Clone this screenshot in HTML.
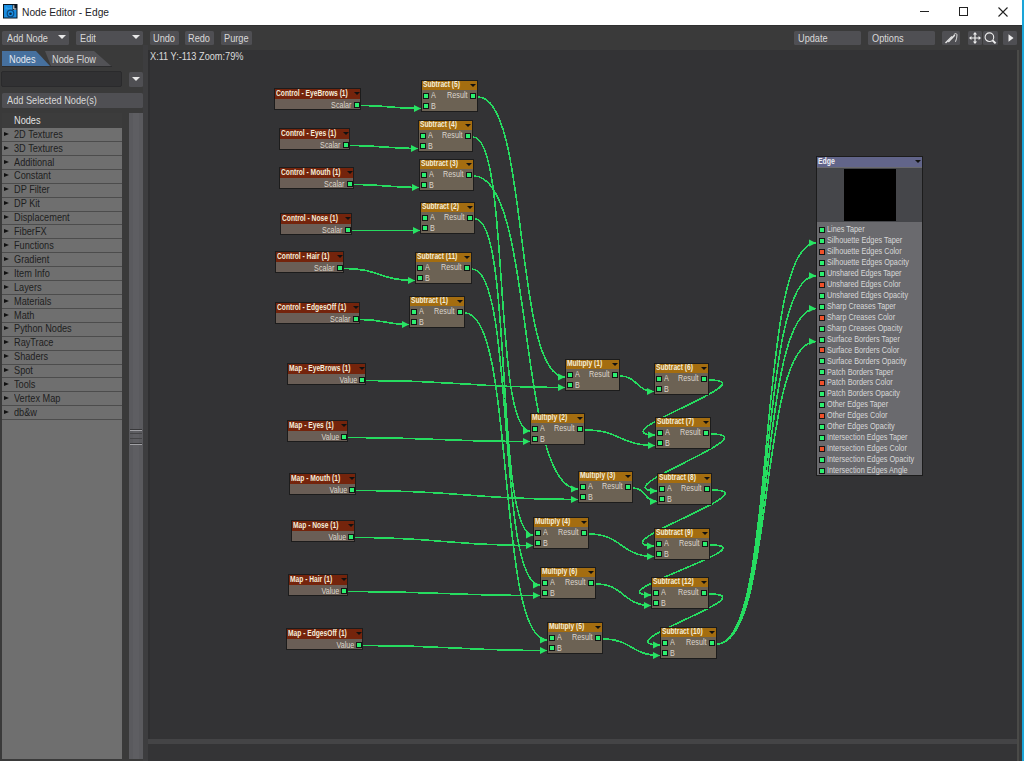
<!DOCTYPE html><html><head><meta charset="utf-8"><style>
*{box-sizing:border-box;margin:0;padding:0}
html,body{width:1024px;height:761px;overflow:hidden;background:#3a3a3a;font-family:"Liberation Sans",sans-serif}
.a{position:absolute}
.t{position:absolute;white-space:nowrap}
.t span{display:inline-block}
.btn{position:absolute;background:#4f4f53;border-radius:1.5px}
.tri{position:absolute;width:0;height:0;border-left:4px solid transparent;border-right:4px solid transparent;border-top:4.5px solid #e8e8e8}
.li{position:absolute;left:2px;width:120px;height:14px;border-bottom:1px solid #4c4c4c}
.ar{position:absolute;left:4px;width:0;height:0;border-top:2.5px solid transparent;border-bottom:2.5px solid transparent;border-left:5px solid #111}
.nd{position:absolute;border:1px solid #1c1c1c;overflow:hidden}
.nh{position:absolute;left:0;right:0;top:0;height:10px}
.nt{position:absolute;right:2px;width:0;height:0;border-left:3px solid transparent;border-right:3px solid transparent;border-top:3.5px solid #111}
.pt{position:absolute;width:6px;height:6px;background:#2cf070;border:1px solid #151515}
.pr{position:absolute;width:6px;height:6px;background:#f0502a;border:1px solid #151515}

</style></head><body>
<div class="a" style="left:0;top:0;width:1022px;height:25px;background:#fff"></div>
<div class="a" style="left:1022px;top:0;width:2px;height:761px;background:#1aa5d8"></div>
<svg class="a" style="left:3px;top:4px" width="15" height="15"><rect x="0" y="0" width="14.5" height="14.5" fill="#0a1622"/><rect x="1" y="1" width="12.5" height="12.5" fill="#1c8ee0"/><path d="M2,5 L3,2 L5,4 L8,4 L10,2 L10.5,6" fill="#2aa0ee"/><circle cx="7.5" cy="9.5" r="3.3" stroke="#0d4a80" stroke-width="1.2" fill="none"/><circle cx="7.5" cy="9.8" r="1.3" fill="#072a48"/><rect x="9.5" y="0.5" width="4.5" height="5.5" fill="#0a1622"/><path d="M10.8,1.2V5H13.3" stroke="#f0f0f0" stroke-width="1" fill="none"/></svg>
<div class="t" style="left:22.00px;top:7.49px;font-size:11px;line-height:11px;color:#1e1e28;font-weight:normal;"><span style="transform:scaleX(0.93);transform-origin:0 0">Node Editor - Edge</span></div>
<div class="a" style="left:920px;top:11px;width:9px;height:1px;background:#222"></div>
<div class="a" style="left:959px;top:7px;width:9px;height:9px;border:1px solid #222"></div>
<svg class="a" style="left:998px;top:7px" width="10" height="10"><path d="M0.5,0.5L9.5,9.5M9.5,0.5L0.5,9.5" stroke="#222" stroke-width="1.1"/></svg>
<div class="a" style="left:0;top:25px;width:1022px;height:24px;background:#3a3a3a"></div>
<div class="a" style="left:0;top:25px;width:1022px;height:1px;background:#303030"></div>
<div class="btn" style="left:2px;top:31px;width:67px;height:14px"></div>
<div class="btn" style="left:76px;top:31px;width:67px;height:14px"></div>
<div class="btn" style="left:150px;top:31px;width:29px;height:14px"></div>
<div class="btn" style="left:185px;top:31px;width:29px;height:14px"></div>
<div class="btn" style="left:221px;top:31px;width:31px;height:14px"></div>
<div class="btn" style="left:794px;top:31px;width:67px;height:14px"></div>
<div class="btn" style="left:868px;top:31px;width:67px;height:14px"></div>
<div class="btn" style="left:942px;top:31px;width:18px;height:14px"></div>
<div class="btn" style="left:968px;top:31px;width:14px;height:14px"></div>
<div class="btn" style="left:983px;top:31px;width:15px;height:14px"></div>
<div class="btn" style="left:1003px;top:31px;width:14px;height:14px"></div>
<div class="t" style="left:6.60px;top:32.69px;font-size:11px;line-height:11px;color:#d8d8d8;font-weight:normal;"><span style="transform:scaleX(0.835);transform-origin:0 0">Add Node</span></div>
<div class="t" style="left:80.30px;top:32.69px;font-size:11px;line-height:11px;color:#d8d8d8;font-weight:normal;"><span style="transform:scaleX(0.835);transform-origin:0 0">Edit</span></div>
<div class="t" style="left:153.00px;top:32.69px;font-size:11px;line-height:11px;color:#d8d8d8;font-weight:normal;"><span style="transform:scaleX(0.835);transform-origin:0 0">Undo</span></div>
<div class="t" style="left:188.00px;top:32.69px;font-size:11px;line-height:11px;color:#d8d8d8;font-weight:normal;"><span style="transform:scaleX(0.835);transform-origin:0 0">Redo</span></div>
<div class="t" style="left:223.50px;top:32.69px;font-size:11px;line-height:11px;color:#d8d8d8;font-weight:normal;"><span style="transform:scaleX(0.835);transform-origin:0 0">Purge</span></div>
<div class="t" style="left:798.00px;top:32.69px;font-size:11px;line-height:11px;color:#d8d8d8;font-weight:normal;"><span style="transform:scaleX(0.835);transform-origin:0 0">Update</span></div>
<div class="t" style="left:871.70px;top:32.69px;font-size:11px;line-height:11px;color:#d8d8d8;font-weight:normal;"><span style="transform:scaleX(0.835);transform-origin:0 0">Options</span></div>
<div class="tri" style="left:58px;top:35px"></div>
<div class="tri" style="left:132px;top:35px"></div>
<svg class="a" style="left:942px;top:31px" width="18" height="14"><path d="M3.5,12 L10,5.5" stroke="#e4e4e4" stroke-width="1.4"/><path d="M5.5,11 L11.5,4.2 Q13,3 13.2,4.8 L7,11.2Z" fill="#e4e4e4"/><path d="M11.8,3.6 Q14.5,1.5 15,3.8 Q15,7 13.5,10.8" stroke="#d8d8d8" stroke-width="1" fill="none"/></svg>
<svg class="a" style="left:968px;top:31px" width="14" height="14"><path d="M7,3V11M3,7H11" stroke="#eee" stroke-width="1.2"/><path d="M7,1L4.9,3.4H9.1ZM7,13L4.9,10.6H9.1ZM1,7L3.4,4.9V9.1ZM13,7L10.6,4.9V9.1Z" fill="#eee"/></svg>
<svg class="a" style="left:983px;top:31px" width="15" height="14"><circle cx="6.4" cy="6.2" r="4.3" stroke="#eee" stroke-width="1.1" fill="none"/><path d="M9.6,9.4L12.6,12.4" stroke="#eee" stroke-width="2"/></svg>
<svg class="a" style="left:1003px;top:31px" width="14" height="14"><path d="M5.5,3.2L10.5,7L5.5,10.8Z" fill="#eee"/></svg>
<div class="a" style="left:0;top:49px;width:148px;height:712px;background:#3a3a3a"></div>
<div class="a" style="left:143px;top:45px;width:5px;height:716px;background:#3d3d3f"></div>
<svg class="a" style="left:0;top:50px" width="115" height="17"><path d="M45,1 H94 L111,16 H51 Z" fill="#525256"/><path d="M2,16.5 H112" stroke="#2c2c2e" stroke-width="1"/><path d="M2,1 H36 L50,16 H2 Z" fill="#46709e"/></svg>
<div class="t" style="left:8.80px;top:53.69px;font-size:11px;line-height:11px;color:#e4e8ee;font-weight:normal;"><span style="transform:scaleX(0.835);transform-origin:0 0">Nodes</span></div>
<div class="t" style="left:52.00px;top:53.69px;font-size:11px;line-height:11px;color:#d8d8d8;font-weight:normal;"><span style="transform:scaleX(0.835);transform-origin:0 0">Node Flow</span></div>
<div class="a" style="left:1px;top:71px;width:121px;height:16px;background:#313133;border:1px solid #2a2a2c;border-radius:2px"></div>
<div class="btn" style="left:129px;top:72px;width:14px;height:15px"></div><div class="tri" style="left:132px;top:77px"></div>
<div class="btn" style="left:2px;top:93px;width:141px;height:15px"></div>
<div class="t" style="left:6.60px;top:95.49px;font-size:11px;line-height:11px;color:#d8d8d8;font-weight:normal;"><span style="transform:scaleX(0.835);transform-origin:0 0">Add Selected Node(s)</span></div>
<div class="a" style="left:2px;top:113px;width:120px;height:646px;background:#6f6f6f"></div>
<div class="a" style="left:2px;top:113px;width:120px;height:15px;background:#3c3c3c"></div>
<div class="t" style="left:14.00px;top:114.89px;font-size:11px;line-height:11px;color:#e2e2e2;font-weight:normal;"><span style="transform:scaleX(0.835);transform-origin:0 0">Nodes</span></div>
<div class="li" style="top:128.00px"></div>
<div class="ar" style="top:131.70px"></div>
<div class="t" style="left:14.00px;top:128.69px;font-size:11px;line-height:11px;color:#1e1e1e;font-weight:normal;"><span style="transform:scaleX(0.835);transform-origin:0 0">2D Textures</span></div>
<div class="li" style="top:141.91px"></div>
<div class="ar" style="top:145.61px"></div>
<div class="t" style="left:14.00px;top:142.60px;font-size:11px;line-height:11px;color:#1e1e1e;font-weight:normal;"><span style="transform:scaleX(0.835);transform-origin:0 0">3D Textures</span></div>
<div class="li" style="top:155.82px"></div>
<div class="ar" style="top:159.52px"></div>
<div class="t" style="left:14.00px;top:156.51px;font-size:11px;line-height:11px;color:#1e1e1e;font-weight:normal;"><span style="transform:scaleX(0.835);transform-origin:0 0">Additional</span></div>
<div class="li" style="top:169.73px"></div>
<div class="ar" style="top:173.43px"></div>
<div class="t" style="left:14.00px;top:170.42px;font-size:11px;line-height:11px;color:#1e1e1e;font-weight:normal;"><span style="transform:scaleX(0.835);transform-origin:0 0">Constant</span></div>
<div class="li" style="top:183.64px"></div>
<div class="ar" style="top:187.34px"></div>
<div class="t" style="left:14.00px;top:184.33px;font-size:11px;line-height:11px;color:#1e1e1e;font-weight:normal;"><span style="transform:scaleX(0.835);transform-origin:0 0">DP Filter</span></div>
<div class="li" style="top:197.55px"></div>
<div class="ar" style="top:201.25px"></div>
<div class="t" style="left:14.00px;top:198.24px;font-size:11px;line-height:11px;color:#1e1e1e;font-weight:normal;"><span style="transform:scaleX(0.835);transform-origin:0 0">DP Kit</span></div>
<div class="li" style="top:211.46px"></div>
<div class="ar" style="top:215.16px"></div>
<div class="t" style="left:14.00px;top:212.15px;font-size:11px;line-height:11px;color:#1e1e1e;font-weight:normal;"><span style="transform:scaleX(0.835);transform-origin:0 0">Displacement</span></div>
<div class="li" style="top:225.37px"></div>
<div class="ar" style="top:229.07px"></div>
<div class="t" style="left:14.00px;top:226.06px;font-size:11px;line-height:11px;color:#1e1e1e;font-weight:normal;"><span style="transform:scaleX(0.835);transform-origin:0 0">FiberFX</span></div>
<div class="li" style="top:239.28px"></div>
<div class="ar" style="top:242.98px"></div>
<div class="t" style="left:14.00px;top:239.97px;font-size:11px;line-height:11px;color:#1e1e1e;font-weight:normal;"><span style="transform:scaleX(0.835);transform-origin:0 0">Functions</span></div>
<div class="li" style="top:253.19px"></div>
<div class="ar" style="top:256.89px"></div>
<div class="t" style="left:14.00px;top:253.88px;font-size:11px;line-height:11px;color:#1e1e1e;font-weight:normal;"><span style="transform:scaleX(0.835);transform-origin:0 0">Gradient</span></div>
<div class="li" style="top:267.10px"></div>
<div class="ar" style="top:270.80px"></div>
<div class="t" style="left:14.00px;top:267.79px;font-size:11px;line-height:11px;color:#1e1e1e;font-weight:normal;"><span style="transform:scaleX(0.835);transform-origin:0 0">Item Info</span></div>
<div class="li" style="top:281.01px"></div>
<div class="ar" style="top:284.71px"></div>
<div class="t" style="left:14.00px;top:281.70px;font-size:11px;line-height:11px;color:#1e1e1e;font-weight:normal;"><span style="transform:scaleX(0.835);transform-origin:0 0">Layers</span></div>
<div class="li" style="top:294.92px"></div>
<div class="ar" style="top:298.62px"></div>
<div class="t" style="left:14.00px;top:295.61px;font-size:11px;line-height:11px;color:#1e1e1e;font-weight:normal;"><span style="transform:scaleX(0.835);transform-origin:0 0">Materials</span></div>
<div class="li" style="top:308.83px"></div>
<div class="ar" style="top:312.53px"></div>
<div class="t" style="left:14.00px;top:309.52px;font-size:11px;line-height:11px;color:#1e1e1e;font-weight:normal;"><span style="transform:scaleX(0.835);transform-origin:0 0">Math</span></div>
<div class="li" style="top:322.74px"></div>
<div class="ar" style="top:326.44px"></div>
<div class="t" style="left:14.00px;top:323.43px;font-size:11px;line-height:11px;color:#1e1e1e;font-weight:normal;"><span style="transform:scaleX(0.835);transform-origin:0 0">Python Nodes</span></div>
<div class="li" style="top:336.65px"></div>
<div class="ar" style="top:340.35px"></div>
<div class="t" style="left:14.00px;top:337.34px;font-size:11px;line-height:11px;color:#1e1e1e;font-weight:normal;"><span style="transform:scaleX(0.835);transform-origin:0 0">RayTrace</span></div>
<div class="li" style="top:350.56px"></div>
<div class="ar" style="top:354.26px"></div>
<div class="t" style="left:14.00px;top:351.25px;font-size:11px;line-height:11px;color:#1e1e1e;font-weight:normal;"><span style="transform:scaleX(0.835);transform-origin:0 0">Shaders</span></div>
<div class="li" style="top:364.47px"></div>
<div class="ar" style="top:368.17px"></div>
<div class="t" style="left:14.00px;top:365.16px;font-size:11px;line-height:11px;color:#1e1e1e;font-weight:normal;"><span style="transform:scaleX(0.835);transform-origin:0 0">Spot</span></div>
<div class="li" style="top:378.38px"></div>
<div class="ar" style="top:382.08px"></div>
<div class="t" style="left:14.00px;top:379.07px;font-size:11px;line-height:11px;color:#1e1e1e;font-weight:normal;"><span style="transform:scaleX(0.835);transform-origin:0 0">Tools</span></div>
<div class="li" style="top:392.29px"></div>
<div class="ar" style="top:395.99px"></div>
<div class="t" style="left:14.00px;top:392.98px;font-size:11px;line-height:11px;color:#1e1e1e;font-weight:normal;"><span style="transform:scaleX(0.835);transform-origin:0 0">Vertex Map</span></div>
<div class="li" style="top:406.20px"></div>
<div class="ar" style="top:409.90px"></div>
<div class="t" style="left:14.00px;top:406.89px;font-size:11px;line-height:11px;color:#1e1e1e;font-weight:normal;"><span style="transform:scaleX(0.835);transform-origin:0 0">db&amp;w</span></div>
<div class="a" style="left:129px;top:113px;width:14px;height:646px;background:#5a5a5e"></div>
<div class="a" style="left:133px;top:113px;width:6px;height:646px;background:#5e5e62"></div>
<div class="a" style="left:130px;top:429px;width:12px;height:1px;background:#38383a"></div>
<div class="a" style="left:130px;top:430px;width:12px;height:1px;background:#a0a0a4"></div>
<div class="a" style="left:130px;top:433px;width:12px;height:1px;background:#444446"></div>
<div class="a" style="left:130px;top:438px;width:12px;height:1px;background:#444446"></div>
<div class="a" style="left:130px;top:443px;width:12px;height:1px;background:#38383a"></div>
<div class="a" style="left:130px;top:444px;width:12px;height:1px;background:#a0a0a4"></div>
<div class="a" style="left:148px;top:50px;width:869px;height:689px;background:#333335"></div>
<div class="a" style="left:148px;top:50px;width:2px;height:689px;background:#2f2f31"></div>
<div class="a" style="left:148px;top:739px;width:869px;height:5px;background:#444446"></div>
<div class="a" style="left:148px;top:744px;width:869px;height:17px;background:#343436"></div>
<div class="a" style="left:1017px;top:50px;width:2px;height:711px;background:#4a4a48"></div>
<div class="t" style="left:150.00px;top:51.19px;font-size:11px;line-height:11px;color:#dcdcdc;font-weight:normal;"><span style="transform:scaleX(0.835);transform-origin:0 0">X:11 Y:-113 Zoom:79%</span></div>
<svg class="a" style="left:0;top:0" width="1024" height="761">
<g fill="none" stroke="#26dc60" stroke-width="1.6" shape-rendering="crispEdges">
<path d="M361.0,105.5 C391.1,105.5 390.9,108.5 421.0,108.5"/>
<path d="M350.0,145.5 C384.1,145.5 383.9,148.5 418.0,148.5"/>
<path d="M354.0,184.5 C386.6,184.5 386.4,187.5 419.0,187.5"/>
<path d="M352.0,230.5 C386.0,230.5 386.0,230.5 420.0,230.5"/>
<path d="M344.0,268.5 C379.9,268.5 379.1,280.5 415.0,280.5"/>
<path d="M360.0,319.5 C384.6,319.5 384.4,324.5 409.0,324.5"/>
<path d="M366.0,380.5 C465.7,380.5 465.3,387.5 565.0,387.5"/>
<path d="M348.0,437.5 C439.1,437.5 438.9,441.5 530.0,441.5"/>
<path d="M356.0,490.5 C467.3,490.5 466.7,499.5 578.0,499.5"/>
<path d="M355.0,537.5 C444.2,537.5 443.8,545.5 533.0,545.5"/>
<path d="M348.0,591.5 C444.1,591.5 443.9,595.5 540.0,595.5"/>
<path d="M363.0,645.5 C455.1,645.5 454.9,650.5 547.0,650.5"/>
<path d="M478.0,97.0 C529.9,97.0 513.1,377.0 565.0,377.0"/>
<path d="M473.0,137.0 C510.3,137.0 492.7,431.0 530.0,431.0"/>
<path d="M474.0,176.0 C535.4,176.0 516.6,489.0 578.0,489.0"/>
<path d="M475.0,219.0 C513.5,219.0 494.5,535.0 533.0,535.0"/>
<path d="M472.0,269.0 C515.5,269.0 496.5,585.0 540.0,585.0"/>
<path d="M465.0,313.0 C515.8,313.0 496.2,640.0 547.0,640.0"/>
<path d="M620.0,376.0 C637.5,376.0 636.5,391.5 654.0,391.5"/>
<path d="M585.0,430.0 C620.5,430.0 619.5,445.5 655.0,445.5"/>
<path d="M633.0,488.0 C645.4,488.0 644.6,501.5 657.0,501.5"/>
<path d="M589.0,534.0 C622.2,534.0 620.8,556.5 654.0,556.5"/>
<path d="M596.0,584.0 C624.1,584.0 622.9,605.5 651.0,605.5"/>
<path d="M603.0,639.0 C632.0,639.0 631.0,655.5 660.0,655.5"/>
<path d="M709.0,380.0 C771.0,380.0 594.5,435.0 656.5,435.0"/>
<path d="M711.0,434.0 C773.0,434.0 596.5,491.0 658.5,491.0"/>
<path d="M712.0,490.0 C774.0,490.0 593.5,546.0 655.5,546.0"/>
<path d="M710.0,545.0 C772.0,545.0 590.5,595.0 652.5,595.0"/>
<path d="M709.0,594.0 C771.0,594.0 599.5,645.0 661.5,645.0"/>
<path d="M717.0,644.0 C778.5,644.0 754.5,242.9 816.0,242.9"/>
<path d="M717.0,644.0 C777.5,644.0 755.5,275.8 816.0,275.8"/>
<path d="M717.0,644.0 C776.6,644.0 756.4,308.6 816.0,308.6"/>
<path d="M717.0,644.0 C775.6,644.0 757.4,341.5 816.0,341.5"/>
</g><g fill="#28e464">
<path d="M421.0,108.5L414.0,105.0L414.0,112.0Z"/>
<path d="M418.0,148.5L411.0,145.0L411.0,152.0Z"/>
<path d="M419.0,187.5L412.0,184.0L412.0,191.0Z"/>
<path d="M420.0,230.5L413.0,227.0L413.0,234.0Z"/>
<path d="M415.0,280.5L408.0,277.0L408.0,284.0Z"/>
<path d="M409.0,324.5L402.0,321.0L402.0,328.0Z"/>
<path d="M565.0,387.5L558.0,384.0L558.0,391.0Z"/>
<path d="M530.0,441.5L523.0,438.0L523.0,445.0Z"/>
<path d="M578.0,499.5L571.0,496.0L571.0,503.0Z"/>
<path d="M533.0,545.5L526.0,542.0L526.0,549.0Z"/>
<path d="M540.0,595.5L533.0,592.0L533.0,599.0Z"/>
<path d="M547.0,650.5L540.0,647.0L540.0,654.0Z"/>
<path d="M565.0,377.0L558.0,373.5L558.0,380.5Z"/>
<path d="M530.0,431.0L523.0,427.5L523.0,434.5Z"/>
<path d="M578.0,489.0L571.0,485.5L571.0,492.5Z"/>
<path d="M533.0,535.0L526.0,531.5L526.0,538.5Z"/>
<path d="M540.0,585.0L533.0,581.5L533.0,588.5Z"/>
<path d="M547.0,640.0L540.0,636.5L540.0,643.5Z"/>
<path d="M654.0,391.5L647.0,388.0L647.0,395.0Z"/>
<path d="M655.0,445.5L648.0,442.0L648.0,449.0Z"/>
<path d="M657.0,501.5L650.0,498.0L650.0,505.0Z"/>
<path d="M654.0,556.5L647.0,553.0L647.0,560.0Z"/>
<path d="M651.0,605.5L644.0,602.0L644.0,609.0Z"/>
<path d="M660.0,655.5L653.0,652.0L653.0,659.0Z"/>
<path d="M655.0,435.0L648.0,431.5L648.0,438.5Z"/>
<path d="M657.0,491.0L650.0,487.5L650.0,494.5Z"/>
<path d="M654.0,546.0L647.0,542.5L647.0,549.5Z"/>
<path d="M651.0,595.0L644.0,591.5L644.0,598.5Z"/>
<path d="M660.0,645.0L653.0,641.5L653.0,648.5Z"/>
<path d="M816.0,242.9L809.0,239.4L809.0,246.4Z"/>
<path d="M816.0,275.8L809.0,272.3L809.0,279.3Z"/>
<path d="M816.0,308.6L809.0,305.1L809.0,312.1Z"/>
<path d="M816.0,341.5L809.0,338.0L809.0,345.0Z"/>
</g></svg>
<div class="nd" style="left:274px;top:88px;width:87px;height:22px;background:#6a5e56">
<div class="nh" style="background:#74240c"></div>
<div class="t" style="left:1.00px;top:0.18px;font-size:9px;line-height:9px;color:#f4eedc;font-weight:bold;"><span style="transform:scaleX(0.74);transform-origin:0 0">Control - EyeBrows (1)</span></div>
<div class="nt" style="top:3px;right:0"></div>
<div class="t" style="right:8.00px;top:11.88px;font-size:9px;line-height:9px;color:#dcd6cc;font-weight:normal;"><span style="transform:scaleX(0.8);transform-origin:100% 0">Scalar</span></div>
<div class="pt" style="right:0px;top:13px"></div>
</div>
<div class="nd" style="left:279px;top:128px;width:71px;height:22px;background:#6a5e56">
<div class="nh" style="background:#74240c"></div>
<div class="t" style="left:1.00px;top:0.18px;font-size:9px;line-height:9px;color:#f4eedc;font-weight:bold;"><span style="transform:scaleX(0.74);transform-origin:0 0">Control - Eyes (1)</span></div>
<div class="nt" style="top:3px;right:0"></div>
<div class="t" style="right:8.00px;top:11.88px;font-size:9px;line-height:9px;color:#dcd6cc;font-weight:normal;"><span style="transform:scaleX(0.8);transform-origin:100% 0">Scalar</span></div>
<div class="pt" style="right:0px;top:13px"></div>
</div>
<div class="nd" style="left:279px;top:167px;width:75px;height:22px;background:#6a5e56">
<div class="nh" style="background:#74240c"></div>
<div class="t" style="left:1.00px;top:0.18px;font-size:9px;line-height:9px;color:#f4eedc;font-weight:bold;"><span style="transform:scaleX(0.74);transform-origin:0 0">Control - Mouth (1)</span></div>
<div class="nt" style="top:3px;right:0"></div>
<div class="t" style="right:8.00px;top:11.88px;font-size:9px;line-height:9px;color:#dcd6cc;font-weight:normal;"><span style="transform:scaleX(0.8);transform-origin:100% 0">Scalar</span></div>
<div class="pt" style="right:0px;top:13px"></div>
</div>
<div class="nd" style="left:280px;top:213px;width:72px;height:22px;background:#6a5e56">
<div class="nh" style="background:#74240c"></div>
<div class="t" style="left:1.00px;top:0.18px;font-size:9px;line-height:9px;color:#f4eedc;font-weight:bold;"><span style="transform:scaleX(0.74);transform-origin:0 0">Control - Nose (1)</span></div>
<div class="nt" style="top:3px;right:0"></div>
<div class="t" style="right:8.00px;top:11.88px;font-size:9px;line-height:9px;color:#dcd6cc;font-weight:normal;"><span style="transform:scaleX(0.8);transform-origin:100% 0">Scalar</span></div>
<div class="pt" style="right:0px;top:13px"></div>
</div>
<div class="nd" style="left:275px;top:251px;width:69px;height:22px;background:#6a5e56">
<div class="nh" style="background:#74240c"></div>
<div class="t" style="left:1.00px;top:0.18px;font-size:9px;line-height:9px;color:#f4eedc;font-weight:bold;"><span style="transform:scaleX(0.74);transform-origin:0 0">Control - Hair (1)</span></div>
<div class="nt" style="top:3px;right:0"></div>
<div class="t" style="right:8.00px;top:11.88px;font-size:9px;line-height:9px;color:#dcd6cc;font-weight:normal;"><span style="transform:scaleX(0.8);transform-origin:100% 0">Scalar</span></div>
<div class="pt" style="right:0px;top:13px"></div>
</div>
<div class="nd" style="left:275px;top:302px;width:85px;height:22px;background:#6a5e56">
<div class="nh" style="background:#74240c"></div>
<div class="t" style="left:1.00px;top:0.18px;font-size:9px;line-height:9px;color:#f4eedc;font-weight:bold;"><span style="transform:scaleX(0.74);transform-origin:0 0">Control - EdgesOff (1)</span></div>
<div class="nt" style="top:3px;right:0"></div>
<div class="t" style="right:8.00px;top:11.88px;font-size:9px;line-height:9px;color:#dcd6cc;font-weight:normal;"><span style="transform:scaleX(0.8);transform-origin:100% 0">Scalar</span></div>
<div class="pt" style="right:0px;top:13px"></div>
</div>
<div class="nd" style="left:287px;top:363px;width:79px;height:22px;background:#6a5e56">
<div class="nh" style="background:#74240c"></div>
<div class="t" style="left:1.00px;top:0.18px;font-size:9px;line-height:9px;color:#f4eedc;font-weight:bold;"><span style="transform:scaleX(0.74);transform-origin:0 0">Map - EyeBrows (1)</span></div>
<div class="nt" style="top:3px;right:0"></div>
<div class="t" style="right:8.00px;top:11.88px;font-size:9px;line-height:9px;color:#dcd6cc;font-weight:normal;"><span style="transform:scaleX(0.8);transform-origin:100% 0">Value</span></div>
<div class="pt" style="right:0px;top:13px"></div>
</div>
<div class="nd" style="left:287px;top:420px;width:61px;height:22px;background:#6a5e56">
<div class="nh" style="background:#74240c"></div>
<div class="t" style="left:1.00px;top:0.18px;font-size:9px;line-height:9px;color:#f4eedc;font-weight:bold;"><span style="transform:scaleX(0.74);transform-origin:0 0">Map - Eyes (1)</span></div>
<div class="nt" style="top:3px;right:0"></div>
<div class="t" style="right:8.00px;top:11.88px;font-size:9px;line-height:9px;color:#dcd6cc;font-weight:normal;"><span style="transform:scaleX(0.8);transform-origin:100% 0">Value</span></div>
<div class="pt" style="right:0px;top:13px"></div>
</div>
<div class="nd" style="left:289px;top:473px;width:67px;height:22px;background:#6a5e56">
<div class="nh" style="background:#74240c"></div>
<div class="t" style="left:1.00px;top:0.18px;font-size:9px;line-height:9px;color:#f4eedc;font-weight:bold;"><span style="transform:scaleX(0.74);transform-origin:0 0">Map - Mouth (1)</span></div>
<div class="nt" style="top:3px;right:0"></div>
<div class="t" style="right:8.00px;top:11.88px;font-size:9px;line-height:9px;color:#dcd6cc;font-weight:normal;"><span style="transform:scaleX(0.8);transform-origin:100% 0">Value</span></div>
<div class="pt" style="right:0px;top:13px"></div>
</div>
<div class="nd" style="left:291px;top:520px;width:64px;height:22px;background:#6a5e56">
<div class="nh" style="background:#74240c"></div>
<div class="t" style="left:1.00px;top:0.18px;font-size:9px;line-height:9px;color:#f4eedc;font-weight:bold;"><span style="transform:scaleX(0.74);transform-origin:0 0">Map - Nose (1)</span></div>
<div class="nt" style="top:3px;right:0"></div>
<div class="t" style="right:8.00px;top:11.88px;font-size:9px;line-height:9px;color:#dcd6cc;font-weight:normal;"><span style="transform:scaleX(0.8);transform-origin:100% 0">Value</span></div>
<div class="pt" style="right:0px;top:13px"></div>
</div>
<div class="nd" style="left:288px;top:574px;width:60px;height:22px;background:#6a5e56">
<div class="nh" style="background:#74240c"></div>
<div class="t" style="left:1.00px;top:0.18px;font-size:9px;line-height:9px;color:#f4eedc;font-weight:bold;"><span style="transform:scaleX(0.74);transform-origin:0 0">Map - Hair (1)</span></div>
<div class="nt" style="top:3px;right:0"></div>
<div class="t" style="right:8.00px;top:11.88px;font-size:9px;line-height:9px;color:#dcd6cc;font-weight:normal;"><span style="transform:scaleX(0.8);transform-origin:100% 0">Value</span></div>
<div class="pt" style="right:0px;top:13px"></div>
</div>
<div class="nd" style="left:286px;top:628px;width:77px;height:22px;background:#6a5e56">
<div class="nh" style="background:#74240c"></div>
<div class="t" style="left:1.00px;top:0.18px;font-size:9px;line-height:9px;color:#f4eedc;font-weight:bold;"><span style="transform:scaleX(0.74);transform-origin:0 0">Map - EdgesOff (1)</span></div>
<div class="nt" style="top:3px;right:0"></div>
<div class="t" style="right:8.00px;top:11.88px;font-size:9px;line-height:9px;color:#dcd6cc;font-weight:normal;"><span style="transform:scaleX(0.8);transform-origin:100% 0">Value</span></div>
<div class="pt" style="right:0px;top:13px"></div>
</div>
<div class="nd" style="left:421px;top:80px;width:57px;height:32px;background:#6c6254">
<div class="nh" style="background:#a46d10;height:9px"></div>
<div class="t" style="left:1.00px;top:-0.62px;font-size:9px;line-height:9px;color:#f4eedc;font-weight:bold;"><span style="transform:scaleX(0.74);transform-origin:0 0">Subtract (5)</span></div>
<div class="nt" style="top:2.5px;right:1px"></div>
<div class="pt" style="left:1px;top:12px"></div><div class="t" style="left:9.00px;top:10.48px;font-size:9px;line-height:9px;color:#dcd6cc;font-weight:normal;"><span style="transform:scaleX(0.8);transform-origin:0 0">A</span></div>
<div class="pt" style="left:1px;top:22px"></div><div class="t" style="left:9.00px;top:21.08px;font-size:9px;line-height:9px;color:#dcd6cc;font-weight:normal;"><span style="transform:scaleX(0.8);transform-origin:0 0">B</span></div>
<div class="t" style="right:9.00px;top:10.48px;font-size:9px;line-height:9px;color:#dcd6cc;font-weight:normal;"><span style="transform:scaleX(0.8);transform-origin:100% 0">Result</span></div><div class="pt" style="right:1px;top:12px"></div>
</div>
<div class="nd" style="left:418px;top:120px;width:55px;height:32px;background:#6c6254">
<div class="nh" style="background:#a46d10;height:9px"></div>
<div class="t" style="left:1.00px;top:-0.62px;font-size:9px;line-height:9px;color:#f4eedc;font-weight:bold;"><span style="transform:scaleX(0.74);transform-origin:0 0">Subtract (4)</span></div>
<div class="nt" style="top:2.5px;right:1px"></div>
<div class="pt" style="left:1px;top:12px"></div><div class="t" style="left:9.00px;top:10.48px;font-size:9px;line-height:9px;color:#dcd6cc;font-weight:normal;"><span style="transform:scaleX(0.8);transform-origin:0 0">A</span></div>
<div class="pt" style="left:1px;top:22px"></div><div class="t" style="left:9.00px;top:21.08px;font-size:9px;line-height:9px;color:#dcd6cc;font-weight:normal;"><span style="transform:scaleX(0.8);transform-origin:0 0">B</span></div>
<div class="t" style="right:9.00px;top:10.48px;font-size:9px;line-height:9px;color:#dcd6cc;font-weight:normal;"><span style="transform:scaleX(0.8);transform-origin:100% 0">Result</span></div><div class="pt" style="right:1px;top:12px"></div>
</div>
<div class="nd" style="left:419px;top:159px;width:55px;height:32px;background:#6c6254">
<div class="nh" style="background:#a46d10;height:9px"></div>
<div class="t" style="left:1.00px;top:-0.62px;font-size:9px;line-height:9px;color:#f4eedc;font-weight:bold;"><span style="transform:scaleX(0.74);transform-origin:0 0">Subtract (3)</span></div>
<div class="nt" style="top:2.5px;right:1px"></div>
<div class="pt" style="left:1px;top:12px"></div><div class="t" style="left:9.00px;top:10.48px;font-size:9px;line-height:9px;color:#dcd6cc;font-weight:normal;"><span style="transform:scaleX(0.8);transform-origin:0 0">A</span></div>
<div class="pt" style="left:1px;top:22px"></div><div class="t" style="left:9.00px;top:21.08px;font-size:9px;line-height:9px;color:#dcd6cc;font-weight:normal;"><span style="transform:scaleX(0.8);transform-origin:0 0">B</span></div>
<div class="t" style="right:9.00px;top:10.48px;font-size:9px;line-height:9px;color:#dcd6cc;font-weight:normal;"><span style="transform:scaleX(0.8);transform-origin:100% 0">Result</span></div><div class="pt" style="right:1px;top:12px"></div>
</div>
<div class="nd" style="left:420px;top:202px;width:55px;height:32px;background:#6c6254">
<div class="nh" style="background:#a46d10;height:9px"></div>
<div class="t" style="left:1.00px;top:-0.62px;font-size:9px;line-height:9px;color:#f4eedc;font-weight:bold;"><span style="transform:scaleX(0.74);transform-origin:0 0">Subtract (2)</span></div>
<div class="nt" style="top:2.5px;right:1px"></div>
<div class="pt" style="left:1px;top:12px"></div><div class="t" style="left:9.00px;top:10.48px;font-size:9px;line-height:9px;color:#dcd6cc;font-weight:normal;"><span style="transform:scaleX(0.8);transform-origin:0 0">A</span></div>
<div class="pt" style="left:1px;top:22px"></div><div class="t" style="left:9.00px;top:21.08px;font-size:9px;line-height:9px;color:#dcd6cc;font-weight:normal;"><span style="transform:scaleX(0.8);transform-origin:0 0">B</span></div>
<div class="t" style="right:9.00px;top:10.48px;font-size:9px;line-height:9px;color:#dcd6cc;font-weight:normal;"><span style="transform:scaleX(0.8);transform-origin:100% 0">Result</span></div><div class="pt" style="right:1px;top:12px"></div>
</div>
<div class="nd" style="left:415px;top:252px;width:57px;height:32px;background:#6c6254">
<div class="nh" style="background:#a46d10;height:9px"></div>
<div class="t" style="left:1.00px;top:-0.62px;font-size:9px;line-height:9px;color:#f4eedc;font-weight:bold;"><span style="transform:scaleX(0.74);transform-origin:0 0">Subtract (11)</span></div>
<div class="nt" style="top:2.5px;right:1px"></div>
<div class="pt" style="left:1px;top:12px"></div><div class="t" style="left:9.00px;top:10.48px;font-size:9px;line-height:9px;color:#dcd6cc;font-weight:normal;"><span style="transform:scaleX(0.8);transform-origin:0 0">A</span></div>
<div class="pt" style="left:1px;top:22px"></div><div class="t" style="left:9.00px;top:21.08px;font-size:9px;line-height:9px;color:#dcd6cc;font-weight:normal;"><span style="transform:scaleX(0.8);transform-origin:0 0">B</span></div>
<div class="t" style="right:9.00px;top:10.48px;font-size:9px;line-height:9px;color:#dcd6cc;font-weight:normal;"><span style="transform:scaleX(0.8);transform-origin:100% 0">Result</span></div><div class="pt" style="right:1px;top:12px"></div>
</div>
<div class="nd" style="left:409px;top:296px;width:56px;height:32px;background:#6c6254">
<div class="nh" style="background:#a46d10;height:9px"></div>
<div class="t" style="left:1.00px;top:-0.62px;font-size:9px;line-height:9px;color:#f4eedc;font-weight:bold;"><span style="transform:scaleX(0.74);transform-origin:0 0">Subtract (1)</span></div>
<div class="nt" style="top:2.5px;right:1px"></div>
<div class="pt" style="left:1px;top:12px"></div><div class="t" style="left:9.00px;top:10.48px;font-size:9px;line-height:9px;color:#dcd6cc;font-weight:normal;"><span style="transform:scaleX(0.8);transform-origin:0 0">A</span></div>
<div class="pt" style="left:1px;top:22px"></div><div class="t" style="left:9.00px;top:21.08px;font-size:9px;line-height:9px;color:#dcd6cc;font-weight:normal;"><span style="transform:scaleX(0.8);transform-origin:0 0">B</span></div>
<div class="t" style="right:9.00px;top:10.48px;font-size:9px;line-height:9px;color:#dcd6cc;font-weight:normal;"><span style="transform:scaleX(0.8);transform-origin:100% 0">Result</span></div><div class="pt" style="right:1px;top:12px"></div>
</div>
<div class="nd" style="left:565px;top:359px;width:55px;height:32px;background:#6c6254">
<div class="nh" style="background:#a46d10;height:9px"></div>
<div class="t" style="left:1.00px;top:-0.62px;font-size:9px;line-height:9px;color:#f4eedc;font-weight:bold;"><span style="transform:scaleX(0.74);transform-origin:0 0">Multiply (1)</span></div>
<div class="nt" style="top:2.5px;right:1px"></div>
<div class="pt" style="left:1px;top:12px"></div><div class="t" style="left:9.00px;top:10.48px;font-size:9px;line-height:9px;color:#dcd6cc;font-weight:normal;"><span style="transform:scaleX(0.8);transform-origin:0 0">A</span></div>
<div class="pt" style="left:1px;top:22px"></div><div class="t" style="left:9.00px;top:21.08px;font-size:9px;line-height:9px;color:#dcd6cc;font-weight:normal;"><span style="transform:scaleX(0.8);transform-origin:0 0">B</span></div>
<div class="t" style="right:9.00px;top:10.48px;font-size:9px;line-height:9px;color:#dcd6cc;font-weight:normal;"><span style="transform:scaleX(0.8);transform-origin:100% 0">Result</span></div><div class="pt" style="right:1px;top:12px"></div>
</div>
<div class="nd" style="left:654px;top:363px;width:55px;height:32px;background:#6c6254">
<div class="nh" style="background:#a46d10;height:9px"></div>
<div class="t" style="left:1.00px;top:-0.62px;font-size:9px;line-height:9px;color:#f4eedc;font-weight:bold;"><span style="transform:scaleX(0.74);transform-origin:0 0">Subtract (6)</span></div>
<div class="nt" style="top:2.5px;right:1px"></div>
<div class="pt" style="left:1px;top:12px"></div><div class="t" style="left:9.00px;top:10.48px;font-size:9px;line-height:9px;color:#dcd6cc;font-weight:normal;"><span style="transform:scaleX(0.8);transform-origin:0 0">A</span></div>
<div class="pt" style="left:1px;top:22px"></div><div class="t" style="left:9.00px;top:21.08px;font-size:9px;line-height:9px;color:#dcd6cc;font-weight:normal;"><span style="transform:scaleX(0.8);transform-origin:0 0">B</span></div>
<div class="t" style="right:9.00px;top:10.48px;font-size:9px;line-height:9px;color:#dcd6cc;font-weight:normal;"><span style="transform:scaleX(0.8);transform-origin:100% 0">Result</span></div><div class="pt" style="right:1px;top:12px"></div>
</div>
<div class="nd" style="left:530px;top:413px;width:55px;height:32px;background:#6c6254">
<div class="nh" style="background:#a46d10;height:9px"></div>
<div class="t" style="left:1.00px;top:-0.62px;font-size:9px;line-height:9px;color:#f4eedc;font-weight:bold;"><span style="transform:scaleX(0.74);transform-origin:0 0">Multiply (2)</span></div>
<div class="nt" style="top:2.5px;right:1px"></div>
<div class="pt" style="left:1px;top:12px"></div><div class="t" style="left:9.00px;top:10.48px;font-size:9px;line-height:9px;color:#dcd6cc;font-weight:normal;"><span style="transform:scaleX(0.8);transform-origin:0 0">A</span></div>
<div class="pt" style="left:1px;top:22px"></div><div class="t" style="left:9.00px;top:21.08px;font-size:9px;line-height:9px;color:#dcd6cc;font-weight:normal;"><span style="transform:scaleX(0.8);transform-origin:0 0">B</span></div>
<div class="t" style="right:9.00px;top:10.48px;font-size:9px;line-height:9px;color:#dcd6cc;font-weight:normal;"><span style="transform:scaleX(0.8);transform-origin:100% 0">Result</span></div><div class="pt" style="right:1px;top:12px"></div>
</div>
<div class="nd" style="left:655px;top:417px;width:56px;height:32px;background:#6c6254">
<div class="nh" style="background:#a46d10;height:9px"></div>
<div class="t" style="left:1.00px;top:-0.62px;font-size:9px;line-height:9px;color:#f4eedc;font-weight:bold;"><span style="transform:scaleX(0.74);transform-origin:0 0">Subtract (7)</span></div>
<div class="nt" style="top:2.5px;right:1px"></div>
<div class="pt" style="left:1px;top:12px"></div><div class="t" style="left:9.00px;top:10.48px;font-size:9px;line-height:9px;color:#dcd6cc;font-weight:normal;"><span style="transform:scaleX(0.8);transform-origin:0 0">A</span></div>
<div class="pt" style="left:1px;top:22px"></div><div class="t" style="left:9.00px;top:21.08px;font-size:9px;line-height:9px;color:#dcd6cc;font-weight:normal;"><span style="transform:scaleX(0.8);transform-origin:0 0">B</span></div>
<div class="t" style="right:9.00px;top:10.48px;font-size:9px;line-height:9px;color:#dcd6cc;font-weight:normal;"><span style="transform:scaleX(0.8);transform-origin:100% 0">Result</span></div><div class="pt" style="right:1px;top:12px"></div>
</div>
<div class="nd" style="left:578px;top:471px;width:55px;height:32px;background:#6c6254">
<div class="nh" style="background:#a46d10;height:9px"></div>
<div class="t" style="left:1.00px;top:-0.62px;font-size:9px;line-height:9px;color:#f4eedc;font-weight:bold;"><span style="transform:scaleX(0.74);transform-origin:0 0">Multiply (3)</span></div>
<div class="nt" style="top:2.5px;right:1px"></div>
<div class="pt" style="left:1px;top:12px"></div><div class="t" style="left:9.00px;top:10.48px;font-size:9px;line-height:9px;color:#dcd6cc;font-weight:normal;"><span style="transform:scaleX(0.8);transform-origin:0 0">A</span></div>
<div class="pt" style="left:1px;top:22px"></div><div class="t" style="left:9.00px;top:21.08px;font-size:9px;line-height:9px;color:#dcd6cc;font-weight:normal;"><span style="transform:scaleX(0.8);transform-origin:0 0">B</span></div>
<div class="t" style="right:9.00px;top:10.48px;font-size:9px;line-height:9px;color:#dcd6cc;font-weight:normal;"><span style="transform:scaleX(0.8);transform-origin:100% 0">Result</span></div><div class="pt" style="right:1px;top:12px"></div>
</div>
<div class="nd" style="left:657px;top:473px;width:55px;height:32px;background:#6c6254">
<div class="nh" style="background:#a46d10;height:9px"></div>
<div class="t" style="left:1.00px;top:-0.62px;font-size:9px;line-height:9px;color:#f4eedc;font-weight:bold;"><span style="transform:scaleX(0.74);transform-origin:0 0">Subtract (8)</span></div>
<div class="nt" style="top:2.5px;right:1px"></div>
<div class="pt" style="left:1px;top:12px"></div><div class="t" style="left:9.00px;top:10.48px;font-size:9px;line-height:9px;color:#dcd6cc;font-weight:normal;"><span style="transform:scaleX(0.8);transform-origin:0 0">A</span></div>
<div class="pt" style="left:1px;top:22px"></div><div class="t" style="left:9.00px;top:21.08px;font-size:9px;line-height:9px;color:#dcd6cc;font-weight:normal;"><span style="transform:scaleX(0.8);transform-origin:0 0">B</span></div>
<div class="t" style="right:9.00px;top:10.48px;font-size:9px;line-height:9px;color:#dcd6cc;font-weight:normal;"><span style="transform:scaleX(0.8);transform-origin:100% 0">Result</span></div><div class="pt" style="right:1px;top:12px"></div>
</div>
<div class="nd" style="left:533px;top:517px;width:56px;height:32px;background:#6c6254">
<div class="nh" style="background:#a46d10;height:9px"></div>
<div class="t" style="left:1.00px;top:-0.62px;font-size:9px;line-height:9px;color:#f4eedc;font-weight:bold;"><span style="transform:scaleX(0.74);transform-origin:0 0">Multiply (4)</span></div>
<div class="nt" style="top:2.5px;right:1px"></div>
<div class="pt" style="left:1px;top:12px"></div><div class="t" style="left:9.00px;top:10.48px;font-size:9px;line-height:9px;color:#dcd6cc;font-weight:normal;"><span style="transform:scaleX(0.8);transform-origin:0 0">A</span></div>
<div class="pt" style="left:1px;top:22px"></div><div class="t" style="left:9.00px;top:21.08px;font-size:9px;line-height:9px;color:#dcd6cc;font-weight:normal;"><span style="transform:scaleX(0.8);transform-origin:0 0">B</span></div>
<div class="t" style="right:9.00px;top:10.48px;font-size:9px;line-height:9px;color:#dcd6cc;font-weight:normal;"><span style="transform:scaleX(0.8);transform-origin:100% 0">Result</span></div><div class="pt" style="right:1px;top:12px"></div>
</div>
<div class="nd" style="left:654px;top:528px;width:56px;height:32px;background:#6c6254">
<div class="nh" style="background:#a46d10;height:9px"></div>
<div class="t" style="left:1.00px;top:-0.62px;font-size:9px;line-height:9px;color:#f4eedc;font-weight:bold;"><span style="transform:scaleX(0.74);transform-origin:0 0">Subtract (9)</span></div>
<div class="nt" style="top:2.5px;right:1px"></div>
<div class="pt" style="left:1px;top:12px"></div><div class="t" style="left:9.00px;top:10.48px;font-size:9px;line-height:9px;color:#dcd6cc;font-weight:normal;"><span style="transform:scaleX(0.8);transform-origin:0 0">A</span></div>
<div class="pt" style="left:1px;top:22px"></div><div class="t" style="left:9.00px;top:21.08px;font-size:9px;line-height:9px;color:#dcd6cc;font-weight:normal;"><span style="transform:scaleX(0.8);transform-origin:0 0">B</span></div>
<div class="t" style="right:9.00px;top:10.48px;font-size:9px;line-height:9px;color:#dcd6cc;font-weight:normal;"><span style="transform:scaleX(0.8);transform-origin:100% 0">Result</span></div><div class="pt" style="right:1px;top:12px"></div>
</div>
<div class="nd" style="left:540px;top:567px;width:56px;height:32px;background:#6c6254">
<div class="nh" style="background:#a46d10;height:9px"></div>
<div class="t" style="left:1.00px;top:-0.62px;font-size:9px;line-height:9px;color:#f4eedc;font-weight:bold;"><span style="transform:scaleX(0.74);transform-origin:0 0">Multiply (6)</span></div>
<div class="nt" style="top:2.5px;right:1px"></div>
<div class="pt" style="left:1px;top:12px"></div><div class="t" style="left:9.00px;top:10.48px;font-size:9px;line-height:9px;color:#dcd6cc;font-weight:normal;"><span style="transform:scaleX(0.8);transform-origin:0 0">A</span></div>
<div class="pt" style="left:1px;top:22px"></div><div class="t" style="left:9.00px;top:21.08px;font-size:9px;line-height:9px;color:#dcd6cc;font-weight:normal;"><span style="transform:scaleX(0.8);transform-origin:0 0">B</span></div>
<div class="t" style="right:9.00px;top:10.48px;font-size:9px;line-height:9px;color:#dcd6cc;font-weight:normal;"><span style="transform:scaleX(0.8);transform-origin:100% 0">Result</span></div><div class="pt" style="right:1px;top:12px"></div>
</div>
<div class="nd" style="left:651px;top:577px;width:58px;height:32px;background:#6c6254">
<div class="nh" style="background:#a46d10;height:9px"></div>
<div class="t" style="left:1.00px;top:-0.62px;font-size:9px;line-height:9px;color:#f4eedc;font-weight:bold;"><span style="transform:scaleX(0.74);transform-origin:0 0">Subtract (12)</span></div>
<div class="nt" style="top:2.5px;right:1px"></div>
<div class="pt" style="left:1px;top:12px"></div><div class="t" style="left:9.00px;top:10.48px;font-size:9px;line-height:9px;color:#dcd6cc;font-weight:normal;"><span style="transform:scaleX(0.8);transform-origin:0 0">A</span></div>
<div class="pt" style="left:1px;top:22px"></div><div class="t" style="left:9.00px;top:21.08px;font-size:9px;line-height:9px;color:#dcd6cc;font-weight:normal;"><span style="transform:scaleX(0.8);transform-origin:0 0">B</span></div>
<div class="t" style="right:9.00px;top:10.48px;font-size:9px;line-height:9px;color:#dcd6cc;font-weight:normal;"><span style="transform:scaleX(0.8);transform-origin:100% 0">Result</span></div><div class="pt" style="right:1px;top:12px"></div>
</div>
<div class="nd" style="left:547px;top:622px;width:56px;height:32px;background:#6c6254">
<div class="nh" style="background:#a46d10;height:9px"></div>
<div class="t" style="left:1.00px;top:-0.62px;font-size:9px;line-height:9px;color:#f4eedc;font-weight:bold;"><span style="transform:scaleX(0.74);transform-origin:0 0">Multiply (5)</span></div>
<div class="nt" style="top:2.5px;right:1px"></div>
<div class="pt" style="left:1px;top:12px"></div><div class="t" style="left:9.00px;top:10.48px;font-size:9px;line-height:9px;color:#dcd6cc;font-weight:normal;"><span style="transform:scaleX(0.8);transform-origin:0 0">A</span></div>
<div class="pt" style="left:1px;top:22px"></div><div class="t" style="left:9.00px;top:21.08px;font-size:9px;line-height:9px;color:#dcd6cc;font-weight:normal;"><span style="transform:scaleX(0.8);transform-origin:0 0">B</span></div>
<div class="t" style="right:9.00px;top:10.48px;font-size:9px;line-height:9px;color:#dcd6cc;font-weight:normal;"><span style="transform:scaleX(0.8);transform-origin:100% 0">Result</span></div><div class="pt" style="right:1px;top:12px"></div>
</div>
<div class="nd" style="left:660px;top:627px;width:57px;height:32px;background:#6c6254">
<div class="nh" style="background:#a46d10;height:9px"></div>
<div class="t" style="left:1.00px;top:-0.62px;font-size:9px;line-height:9px;color:#f4eedc;font-weight:bold;"><span style="transform:scaleX(0.74);transform-origin:0 0">Subtract (10)</span></div>
<div class="nt" style="top:2.5px;right:1px"></div>
<div class="pt" style="left:1px;top:12px"></div><div class="t" style="left:9.00px;top:10.48px;font-size:9px;line-height:9px;color:#dcd6cc;font-weight:normal;"><span style="transform:scaleX(0.8);transform-origin:0 0">A</span></div>
<div class="pt" style="left:1px;top:22px"></div><div class="t" style="left:9.00px;top:21.08px;font-size:9px;line-height:9px;color:#dcd6cc;font-weight:normal;"><span style="transform:scaleX(0.8);transform-origin:0 0">B</span></div>
<div class="t" style="right:9.00px;top:10.48px;font-size:9px;line-height:9px;color:#dcd6cc;font-weight:normal;"><span style="transform:scaleX(0.8);transform-origin:100% 0">Result</span></div><div class="pt" style="right:1px;top:12px"></div>
</div>
<div class="nd" style="left:816px;top:156px;width:107px;height:320px;background:#6a6a6e">
<div class="nh" style="background:#62658a"></div>
<div class="t" style="left:1.00px;top:0.38px;font-size:9px;line-height:9px;color:#eeeef4;font-weight:bold;"><span style="transform:scaleX(0.77);transform-origin:0 0">Edge</span></div>
<div class="nt" style="top:3px;right:1px"></div>
<div class="a" style="left:0;top:11px;width:106px;height:54px;background:#45464a"></div>
<div class="a" style="left:27px;top:12px;width:52px;height:52px;background:#000"></div>
<div class="pt" style="left:2px;top:70.0px"></div>
<div class="t" style="left:9.70px;top:68.18px;font-size:9px;line-height:9px;color:#d8d8d8;font-weight:normal;"><span style="transform:scaleX(0.81);transform-origin:0 0">Lines Taper</span></div>
<div class="pt" style="left:2px;top:80.9px"></div>
<div class="t" style="left:9.70px;top:79.13px;font-size:9px;line-height:9px;color:#d8d8d8;font-weight:normal;"><span style="transform:scaleX(0.81);transform-origin:0 0">Silhouette Edges Taper</span></div>
<div class="pr" style="left:2px;top:91.9px"></div>
<div class="t" style="left:9.70px;top:90.08px;font-size:9px;line-height:9px;color:#d8d8d8;font-weight:normal;"><span style="transform:scaleX(0.81);transform-origin:0 0">Silhouette Edges Color</span></div>
<div class="pt" style="left:2px;top:102.9px"></div>
<div class="t" style="left:9.70px;top:101.03px;font-size:9px;line-height:9px;color:#d8d8d8;font-weight:normal;"><span style="transform:scaleX(0.81);transform-origin:0 0">Silhouette Edges Opacity</span></div>
<div class="pt" style="left:2px;top:113.8px"></div>
<div class="t" style="left:9.70px;top:111.98px;font-size:9px;line-height:9px;color:#d8d8d8;font-weight:normal;"><span style="transform:scaleX(0.81);transform-origin:0 0">Unshared Edges Taper</span></div>
<div class="pr" style="left:2px;top:124.8px"></div>
<div class="t" style="left:9.70px;top:122.93px;font-size:9px;line-height:9px;color:#d8d8d8;font-weight:normal;"><span style="transform:scaleX(0.81);transform-origin:0 0">Unshared Edges Color</span></div>
<div class="pt" style="left:2px;top:135.7px"></div>
<div class="t" style="left:9.70px;top:133.88px;font-size:9px;line-height:9px;color:#d8d8d8;font-weight:normal;"><span style="transform:scaleX(0.81);transform-origin:0 0">Unshared Edges Opacity</span></div>
<div class="pt" style="left:2px;top:146.6px"></div>
<div class="t" style="left:9.70px;top:144.83px;font-size:9px;line-height:9px;color:#d8d8d8;font-weight:normal;"><span style="transform:scaleX(0.81);transform-origin:0 0">Sharp Creases Taper</span></div>
<div class="pr" style="left:2px;top:157.6px"></div>
<div class="t" style="left:9.70px;top:155.78px;font-size:9px;line-height:9px;color:#d8d8d8;font-weight:normal;"><span style="transform:scaleX(0.81);transform-origin:0 0">Sharp Creases Color</span></div>
<div class="pt" style="left:2px;top:168.6px"></div>
<div class="t" style="left:9.70px;top:166.73px;font-size:9px;line-height:9px;color:#d8d8d8;font-weight:normal;"><span style="transform:scaleX(0.81);transform-origin:0 0">Sharp Creases Opacity</span></div>
<div class="pt" style="left:2px;top:179.5px"></div>
<div class="t" style="left:9.70px;top:177.68px;font-size:9px;line-height:9px;color:#d8d8d8;font-weight:normal;"><span style="transform:scaleX(0.81);transform-origin:0 0">Surface Borders Taper</span></div>
<div class="pr" style="left:2px;top:190.4px"></div>
<div class="t" style="left:9.70px;top:188.63px;font-size:9px;line-height:9px;color:#d8d8d8;font-weight:normal;"><span style="transform:scaleX(0.81);transform-origin:0 0">Surface Borders Color</span></div>
<div class="pt" style="left:2px;top:201.4px"></div>
<div class="t" style="left:9.70px;top:199.58px;font-size:9px;line-height:9px;color:#d8d8d8;font-weight:normal;"><span style="transform:scaleX(0.81);transform-origin:0 0">Surface Borders Opacity</span></div>
<div class="pt" style="left:2px;top:212.4px"></div>
<div class="t" style="left:9.70px;top:210.53px;font-size:9px;line-height:9px;color:#d8d8d8;font-weight:normal;"><span style="transform:scaleX(0.81);transform-origin:0 0">Patch Borders Taper</span></div>
<div class="pr" style="left:2px;top:223.3px"></div>
<div class="t" style="left:9.70px;top:221.48px;font-size:9px;line-height:9px;color:#d8d8d8;font-weight:normal;"><span style="transform:scaleX(0.81);transform-origin:0 0">Patch Borders Color</span></div>
<div class="pt" style="left:2px;top:234.2px"></div>
<div class="t" style="left:9.70px;top:232.43px;font-size:9px;line-height:9px;color:#d8d8d8;font-weight:normal;"><span style="transform:scaleX(0.81);transform-origin:0 0">Patch Borders Opacity</span></div>
<div class="pt" style="left:2px;top:245.2px"></div>
<div class="t" style="left:9.70px;top:243.38px;font-size:9px;line-height:9px;color:#d8d8d8;font-weight:normal;"><span style="transform:scaleX(0.81);transform-origin:0 0">Other Edges Taper</span></div>
<div class="pr" style="left:2px;top:256.1px"></div>
<div class="t" style="left:9.70px;top:254.33px;font-size:9px;line-height:9px;color:#d8d8d8;font-weight:normal;"><span style="transform:scaleX(0.81);transform-origin:0 0">Other Edges Color</span></div>
<div class="pt" style="left:2px;top:267.1px"></div>
<div class="t" style="left:9.70px;top:265.28px;font-size:9px;line-height:9px;color:#d8d8d8;font-weight:normal;"><span style="transform:scaleX(0.81);transform-origin:0 0">Other Edges Opacity</span></div>
<div class="pt" style="left:2px;top:278.0px"></div>
<div class="t" style="left:9.70px;top:276.23px;font-size:9px;line-height:9px;color:#d8d8d8;font-weight:normal;"><span style="transform:scaleX(0.81);transform-origin:0 0">Intersection Edges Taper</span></div>
<div class="pr" style="left:2px;top:289.0px"></div>
<div class="t" style="left:9.70px;top:287.18px;font-size:9px;line-height:9px;color:#d8d8d8;font-weight:normal;"><span style="transform:scaleX(0.81);transform-origin:0 0">Intersection Edges Color</span></div>
<div class="pt" style="left:2px;top:299.9px"></div>
<div class="t" style="left:9.70px;top:298.13px;font-size:9px;line-height:9px;color:#d8d8d8;font-weight:normal;"><span style="transform:scaleX(0.81);transform-origin:0 0">Intersection Edges Opacity</span></div>
<div class="pt" style="left:2px;top:310.9px"></div>
<div class="t" style="left:9.70px;top:309.08px;font-size:9px;line-height:9px;color:#d8d8d8;font-weight:normal;"><span style="transform:scaleX(0.81);transform-origin:0 0">Intersection Edges Angle</span></div>
</div>
</body></html>
